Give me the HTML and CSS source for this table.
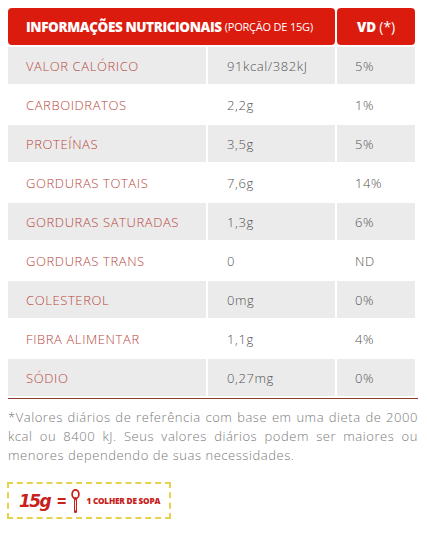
FILE: index.html
```html
<!DOCTYPE html>
<html lang="pt-BR">
<head>
<meta charset="utf-8">
<link rel="stylesheet" href="styles.css">
</head>
<body>
<div class="page">
  <div class="table">
    <div class="th th-main"><span class="th-bold">INFORMAÇÕES NUTRICIONAIS</span> <span class="th-small">(PORÇÃO DE 15G)</span></div>
    <div class="th th-vd">VD <span class="th-ast">(*)</span></div>

    <div class="td lbl g">VALOR CALÓRICO</div><div class="td val g">91kcal/382kJ</div><div class="td vd g">5%</div>
    <div class="td lbl">CARBOIDRATOS</div><div class="td val">2,2g</div><div class="td vd">1%</div>
    <div class="td lbl g">PROTEÍNAS</div><div class="td val g">3,5g</div><div class="td vd g">5%</div>
    <div class="td lbl">GORDURAS TOTAIS</div><div class="td val">7,6g</div><div class="td vd">14%</div>
    <div class="td lbl g">GORDURAS SATURADAS</div><div class="td val g">1,3g</div><div class="td vd g">6%</div>
    <div class="td lbl">GORDURAS TRANS</div><div class="td val">0</div><div class="td vd">ND</div>
    <div class="td lbl g">COLESTEROL</div><div class="td val g">0mg</div><div class="td vd g">0%</div>
    <div class="td lbl">FIBRA ALIMENTAR</div><div class="td val">1,1g</div><div class="td vd">4%</div>
    <div class="td lbl g">SÓDIO</div><div class="td val g">0,27mg</div><div class="td vd g">0%</div>
  </div>
  <div class="rule"></div>
  <p class="note">*Valores diários de referência com base em uma dieta de 2000 kcal ou 8400 kJ. Seus valores diários podem ser maiores ou menores dependendo de suas necessidades.</p>
  <div class="badge">
    <span class="b-g">15g</span>
    <span class="b-eq">=</span>
    <svg class="spoon" width="9" height="24" viewBox="0 0 9 24">
      <ellipse cx="4.5" cy="5.2" rx="3.4" ry="4.4" fill="none" stroke="#c8211b" stroke-width="1.7"/>
      <path d="M4.5 9.6 L4.5 22.6" stroke="#c8211b" stroke-width="3" stroke-linecap="round"/>
      <path d="M4.5 11.5 L4.5 21" stroke="#fff" stroke-width="0.9" stroke-linecap="round"/>
    </svg>
    <span class="b-txt">1 COLHER DE SOPA</span>
  </div>
</div>
</body>
</html>
```

FILE: styles.css
```css
html, body {
  margin: 0;
  padding: 0;
  background: #ffffff;
}
body {
  font-family: "Open Sans", "DejaVu Sans", sans-serif;
}
.page {
  padding: 8px 9px 0 8px;
}
.table {
  display: grid;
  grid-template-columns: 198px 127px 78px;
  grid-auto-rows: 37px;
  column-gap: 2px;
  row-gap: 2px;
}
.th {
  background: #dc1b0f;
  color: #fff;
  border-radius: 4px;
  display: flex;
  align-items: center;
}
.th-main {
  grid-column: 1 / span 2;
  padding-left: 18px;
  white-space: nowrap;
}
.th-bold {
  font-weight: 800;
  font-size: 13.5px;
  letter-spacing: -0.4px;
}
.th-small {
  font-weight: 400;
  font-size: 11px;
  letter-spacing: -0.2px;
  margin-left: 3px;
}
.th-vd {
  padding-left: 20px;
  font-weight: 800;
  font-size: 13.5px;
}
.th-ast {
  font-weight: 400;
  font-size: 14px;
  margin-left: 3px;
}
.td {
  display: flex;
  align-items: center;
  font-size: 13px;
  font-weight: 300;
  letter-spacing: 0.6px;
}
.g {
  background: #ebebeb;
}
.lbl {
  padding-left: 18px;
  color: #b8463d;
}
.val {
  padding-left: 19px;
  color: #555;
}
.vd {
  padding-left: 18px;
  color: #555;
}
.rule {
  height: 1px;
  background: #8c3a2c;
  margin-top: 2px;
  width: 410px;
}
.note {
  margin: 9px 0 0 0;
  color: #7a7a7a;
  font-size: 13px;
  font-weight: 300;
  letter-spacing: 0.55px;
  line-height: 19px;
  text-align: justify;
  width: 410px;
}
.badge {
  margin-top: 17px;
  margin-left: -1px;
  width: 164px;
  height: 37px;
  box-sizing: border-box;
  border: 2px dashed #e6d24d;
  display: flex;
  align-items: center;
  padding-left: 10px;
  color: #c8211b;
  white-space: nowrap;
}
.b-g {
  font-family: "DejaVu Sans", sans-serif;
  font-style: italic;
  font-weight: 700;
  font-size: 17px;
  letter-spacing: -1.6px;
}
.b-eq {
  font-weight: 800;
  font-size: 16px;
  margin-left: 7px;
}
.spoon {
  margin-left: 5px;
  flex-shrink: 0;
}
.b-txt {
  font-weight: 800;
  font-size: 8.2px;
  margin-left: 6px;
  letter-spacing: -0.2px;
}
```
